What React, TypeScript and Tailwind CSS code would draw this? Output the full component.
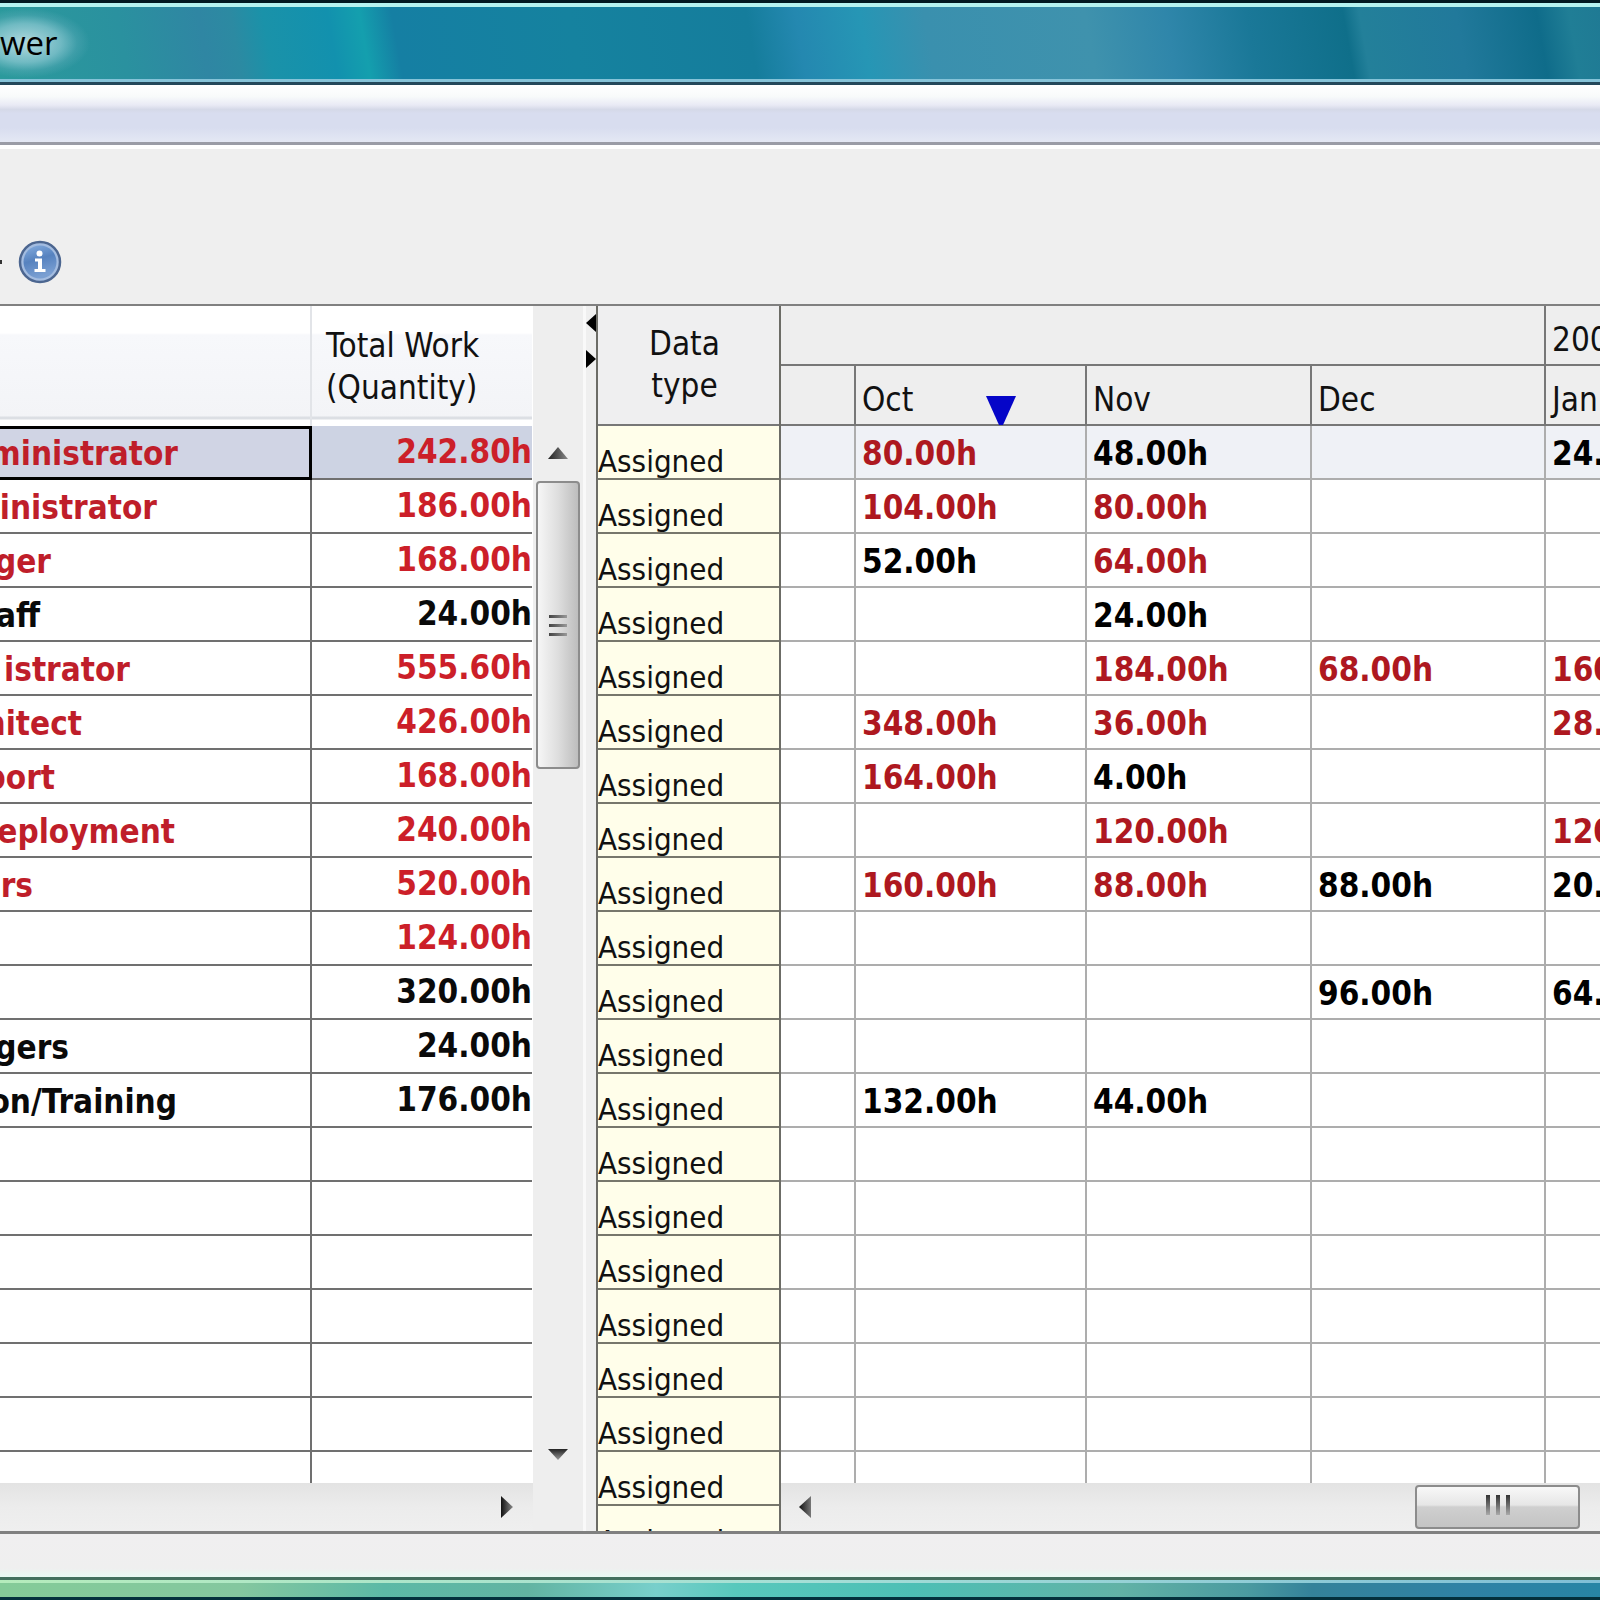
interface Hours {
    value: string;
    over?: boolean;
}

interface ResourceRow {
    name?: string;
    // right edge of the name inside the scrolled column
    nameEnd?: number;
    total?: string;
    over?: boolean;
    oct?: Hours;
    nov?: Hours;
    dec?: Hours;
    jan?: Hours;
}

const resources: ResourceRow[] = [
    { name: 'ministrator', nameEnd: 178, total: '242.80h', over: true, oct: { value: '80.00h', over: true }, nov: { value: '48.00h' }, jan: { value: '24.' } },
    { name: 'inistrator', nameEnd: 157, total: '186.00h', over: true, oct: { value: '104.00h', over: true }, nov: { value: '80.00h', over: true } },
    { name: 'ger', nameEnd: 51, total: '168.00h', over: true, oct: { value: '52.00h' }, nov: { value: '64.00h', over: true } },
    { name: 'aff', nameEnd: 40, total: '24.00h', nov: { value: '24.00h' } },
    { name: 'istrator', nameEnd: 130, total: '555.60h', over: true, nov: { value: '184.00h', over: true }, dec: { value: '68.00h', over: true }, jan: { value: '160', over: true } },
    { name: 'hitect', nameEnd: 82, total: '426.00h', over: true, oct: { value: '348.00h', over: true }, nov: { value: '36.00h', over: true }, jan: { value: '28.', over: true } },
    { name: 'port', nameEnd: 55, total: '168.00h', over: true, oct: { value: '164.00h', over: true }, nov: { value: '4.00h' } },
    { name: 'eployment', nameEnd: 175, total: '240.00h', over: true, nov: { value: '120.00h', over: true }, jan: { value: '120', over: true } },
    { name: 'ers', nameEnd: 33, total: '520.00h', over: true, oct: { value: '160.00h', over: true }, nov: { value: '88.00h', over: true }, dec: { value: '88.00h' }, jan: { value: '20.' } },
    { total: '124.00h', over: true },
    { total: '320.00h', dec: { value: '96.00h' }, jan: { value: '64.' } },
    { name: 'gers', nameEnd: 69, total: '24.00h' },
    { name: 'on/Training', nameEnd: 177, total: '176.00h', oct: { value: '132.00h' }, nov: { value: '44.00h' } },
    {},
    {},
    {},
    {},
    {},
    {},
    {},
];

const months = ['oct', 'nov', 'dec', 'jan'] as const;

function InfoIcon() {
    return (
        <svg viewBox="0 0 44 44" className="w-11 h-11">
            <defs>
                <linearGradient id="info" x1="0" y1="0" x2="0.3" y2="1">
                    <stop offset="0" stopColor="#86aee0" />
                    <stop offset="0.5" stopColor="#5682bf" />
                    <stop offset="1" stopColor="#7a9fd2" />
                </linearGradient>
            </defs>
            <circle cx="22" cy="22" r="20" fill="#a3bce0" stroke="#4c6690" strokeWidth="2.5" />
            <circle cx="22" cy="22" r="16.5" fill="url(#info)" />
            <circle cx="21.5" cy="13.5" r="3" fill="#fff" />
            <path d="M17 18.5h7v10.5h3.5v3h-11v-3H20v-7.5h-3z" fill="#fff" />
        </svg>
    );
}

function TitleBar() {
    return (
        <header>
            <div className="h-[3px] bg-[#021a22]" />
            <div className="h-1 bg-[#b5f3f0]" />
            <div className="h-18 flex items-center overflow-hidden bg-[linear-gradient(80deg,#2b9a9c_0%,#2a919f_8%,#2f86a3_13%,#2c8aa2_15%,#1a92a9_17%,#1291ae_21%,#149fae_23%,#157fa3_25%,#15829f_36%,#157d9c_47%,#2488b0_50%,#2696b5_54%,#3a90ae_58%,#3f92ad_68%,#2f86aa_73%,#1a7898_78%,#0f6f8a_84%,#23809a_85%,#21799b_91%,#0f6c8a_96%,#207e96_98%,#1f7a94_100%)]">
                <div className="-ml-10 pl-10 pr-8 bg-[radial-gradient(closest-side,rgba(185,220,226,0.95),rgba(150,205,215,0.65)_55%,rgba(120,185,200,0.25)_80%,transparent)]">
                    <h1 className="font-['Open_Sans',sans-serif] text-[33px] leading-[70px] text-black">wer</h1>
                </div>
            </div>
            <div className="h-[3px] bg-[#85c3d8]" />
            <div className="h-[3px] bg-[#23485a]" />
        </header>
    );
}

function ResourcePane() {
    return (
        <section className="w-[596px] shrink-0 flex">
            <div className="w-[533px] shrink-0 flex flex-col">
                <div className="h-[1177px] overflow-hidden bg-white">
                    <table className="w-[532px] table-fixed border-separate border-spacing-0">
                        <colgroup>
                            <col className="w-[312px]" />
                            <col />
                        </colgroup>
                        <thead>
                            <tr className="h-30 bg-[linear-gradient(#fff_0,#fff_27px,#f7f8fb_29px,#f3f4f7_110px,#dcdfe4_111px,#dcdfe4_113px,#fff_114px)]">
                                <th className="border-r-2 border-[#e2e4e8]" />
                                <th className="pl-3.5 pt-0.5 text-left font-normal leading-[42px]">
                                    Total Work
                                    <br />
                                    (Quantity)
                                </th>
                            </tr>
                        </thead>
                        <tbody>
                            {resources.map((row, i) => (
                                <tr key={i} className="h-[54px]">
                                    <td className={i === 0
                                        ? 'border-y-3 border-r-3 border-black bg-[#d0d4e4]'
                                        : 'border-b-2 border-r-2 border-[#707070] pt-1'}
                                    >
                                        {row.name && (
                                            <div
                                                className={`flex justify-end whitespace-nowrap font-bold leading-9 ${i === 0 ? 'pt-0.5' : ''} ${row.over ? 'text-[#bf1e2a]' : 'text-[#0a0a0a]'}`}
                                                style={{ width: row.nameEnd }}
                                            >
                                                {row.name}
                                            </div>
                                        )}
                                    </td>
                                    <td className={`border-b-2 border-[#707070] text-right font-bold leading-9 ${i === 0 ? 'bg-[#cdd3e3]' : ''} ${row.over ? 'text-[#cc1f29]' : 'text-[#0a0a0a]'}`}>
                                        {row.total}
                                    </td>
                                </tr>
                            ))}
                        </tbody>
                    </table>
                </div>
                <div className="h-12 flex items-center justify-end pr-5 bg-linear-to-b from-[#e3e3e3] via-[#ececec] to-[#efefef]">
                    <button aria-label="Scroll right">
                        <svg viewBox="0 0 12 22" className="w-3 h-[22px]">
                            <defs>
                                <linearGradient id="right">
                                    <stop offset="0" stopColor="#111" />
                                    <stop offset="1" stopColor="#888" />
                                </linearGradient>
                            </defs>
                            <path d="M0 0L12 11L0 22z" fill="url(#right)" />
                        </svg>
                    </button>
                </div>
            </div>

            {/* vertical scrollbar */}
            <div className="w-[50px] shrink-0 flex flex-col items-center bg-[#eeeeee]">
                <div className="h-[141px]" />
                <button aria-label="Scroll up">
                    <svg viewBox="0 0 20 12" className="w-5 h-3">
                        <defs>
                            <linearGradient id="up" x1="0" y1="0" x2="1" y2="0">
                                <stop offset="0" stopColor="#222" />
                                <stop offset="1" stopColor="#888" />
                            </linearGradient>
                        </defs>
                        <path d="M0 12L10 0L20 12z" fill="url(#up)" />
                    </svg>
                </button>
                <div className="h-[22px]" />
                <button
                    aria-label="Vertical scroll"
                    className="w-11 h-[288px] flex flex-col items-center justify-center gap-1.5 rounded-sm border-2 border-[#8c8c8c] bg-linear-to-r from-[#f6f6f6] via-[#dedede] to-[#bdbdbd]"
                >
                    <span className="w-[18px] h-[3px] bg-linear-to-r from-[#444] to-[#999]" />
                    <span className="w-[18px] h-[3px] bg-linear-to-r from-[#444] to-[#999]" />
                    <span className="w-[18px] h-[3px] bg-linear-to-r from-[#444] to-[#999]" />
                </button>
                <div className="grow" />
                <button aria-label="Scroll down">
                    <svg viewBox="0 0 20 12" className="w-5 h-3">
                        <defs>
                            <linearGradient id="down" x1="0" y1="0" x2="0" y2="1">
                                <stop offset="0" stopColor="#222" />
                                <stop offset="1" stopColor="#999" />
                            </linearGradient>
                        </defs>
                        <path d="M0 0L10 11L20 0z" fill="url(#down)" />
                    </svg>
                </button>
                <div className="h-[70px]" />
            </div>

            {/* splitter */}
            <div className="grow flex flex-col items-end gap-[18px] pt-2 border-l-3 border-[#f9f9f9] bg-[#efefef]">
                <button aria-label="Collapse left">
                    <svg viewBox="0 0 10 18" className="w-2.5 h-[18px]">
                        <path d="M10 0L0 9L10 18z" fill="#000" />
                    </svg>
                </button>
                <button aria-label="Collapse right">
                    <svg viewBox="0 0 10 18" className="w-2.5 h-[18px]">
                        <path d="M0 0L10 9L0 18z" fill="#000" />
                    </svg>
                </button>
            </div>
        </section>
    );
}

function DataTypeColumn() {
    return (
        <div className="w-[185px] shrink-0 h-[1225px] overflow-hidden border-x-2 border-[#6c6c66] bg-[#fffeea]">
            <table className="w-full table-fixed border-separate border-spacing-0">
                <thead>
                    <tr className="h-30 bg-[#efeff0]">
                        <th className="border-b-2 border-[#777] pr-2 font-normal leading-[42px]">
                            Data
                            <br />
                            type
                        </th>
                    </tr>
                </thead>
                <tbody className="text-[31px]">
                    {[...resources, {}].map((_, i) => (
                        <tr key={i} className="h-[54px]">
                            <td className="border-b-2 border-[#77776c] pt-[18px] leading-8">Assigned</td>
                        </tr>
                    ))}
                </tbody>
            </table>
        </div>
    );
}

function Timeline() {
    return (
        <div className="grow min-w-0 flex flex-col">
            <div className="h-[1177px] overflow-hidden bg-white">
                <table className="w-full table-fixed border-separate border-spacing-0">
                    <colgroup>
                        <col className="w-[75px]" />
                        <col className="w-[231px]" />
                        <col className="w-[225px]" />
                        <col className="w-[234px]" />
                        <col />
                    </colgroup>
                    <thead className="bg-[#eeeeee] text-left whitespace-nowrap">
                        <tr className="h-15">
                            <th colSpan={4} className="border-b-2 border-r-2 border-[#777]" />
                            <th className="border-b-2 border-[#777] pl-1.5 pt-2.5 overflow-hidden font-normal leading-9">200</th>
                        </tr>
                        <tr className="h-15">
                            <th className="border-b-2 border-r-2 border-[#777]" />
                            <th className="relative border-b-2 border-r-2 border-[#777] pl-1.5 pt-2.5 font-normal leading-9">
                                Oct
                                {/* current date marker */}
                                <svg viewBox="0 0 30 30" className="absolute left-[130px] top-[30px] w-[30px] h-[30px]">
                                    <path d="M0 0H30L17 29H13z" fill="#0505c8" />
                                </svg>
                            </th>
                            <th className="border-b-2 border-r-2 border-[#777] pl-1.5 pt-2.5 font-normal leading-9">Nov</th>
                            <th className="border-b-2 border-r-2 border-[#777] pl-1.5 pt-2.5 font-normal leading-9">Dec</th>
                            <th className="border-b-2 border-[#777] pl-1.5 pt-2.5 overflow-hidden font-normal leading-9">Jan</th>
                        </tr>
                    </thead>
                    <tbody>
                        {resources.map((row, i) => (
                            <tr key={i} className={`h-[54px] ${i === 0 ? 'bg-[#eff1f6]' : ''}`}>
                                <td className="border-b-2 border-r-2 border-[#adadad]" />
                                {months.map((month) => {
                                    const hours = row[month];
                                    return (
                                        <td
                                            key={month}
                                            className={`border-b-2 border-[#adadad] pl-1.5 pt-1 overflow-hidden whitespace-nowrap font-bold leading-9 ${month === 'jan' ? '' : 'border-r-2'} ${hours?.over ? 'text-[#ae1820]' : 'text-black'}`}
                                        >
                                            {hours?.value}
                                        </td>
                                    );
                                })}
                            </tr>
                        ))}
                    </tbody>
                </table>
            </div>
            <div className="h-12 flex items-center justify-between pl-[18px] pr-5 bg-linear-to-b from-[#e3e3e3] via-[#ececec] to-[#efefef]">
                <button aria-label="Scroll left">
                    <svg viewBox="0 0 12 22" className="w-3 h-[22px]">
                        <defs>
                            <linearGradient id="left">
                                <stop offset="0" stopColor="#111" />
                                <stop offset="1" stopColor="#777" />
                            </linearGradient>
                        </defs>
                        <path d="M12 0L0 11L12 22z" fill="url(#left)" />
                    </svg>
                </button>
                <button
                    aria-label="Horizontal scroll"
                    className="w-[165px] h-11 flex items-center justify-center gap-1.5 pb-1 rounded-sm border-2 border-[#8c8c8c] bg-[linear-gradient(#f8f8f8,#e6e6e6_45%,#cfcfcf_50%,#c4c4c4)]"
                >
                    <span className="w-1 h-5 bg-linear-to-b from-[#333] to-[#aaa]" />
                    <span className="w-1 h-5 bg-linear-to-b from-[#333] to-[#aaa]" />
                    <span className="w-1 h-5 bg-linear-to-b from-[#333] to-[#aaa]" />
                </button>
            </div>
        </div>
    );
}

export default function App() {
    return (
        <div className="w-full overflow-hidden bg-[#efefef] font-['DejaVu_Sans_Condensed','DejaVu_Sans',sans-serif] text-[33px] text-[#111]">
            <TitleBar />

            {/* menu bar */}
            <div className="h-[60px] border-b-3 border-[#9a9ca6] bg-[linear-gradient(#fff_0,#f8fbfb_20%,#e9eaf5_35%,#d5d9e8_43%,#d8ddef_50%,#d8ddef_75%,#e4e8f4_100%)]" />

            {/* toolbar */}
            <div className="h-[159px] flex items-end gap-4 pb-5 border-t-4 border-white">
                <span className="w-0.5 h-1 mb-5 bg-[#333]" />
                <button aria-label="Information">
                    <InfoIcon />
                </button>
            </div>

            <main className="flex border-t-2 border-b-3 border-[#808080]">
                <ResourcePane />
                <DataTypeColumn />
                <Timeline />
            </main>

            {/* status bar and window frame */}
            <footer>
                <div className="h-[43px] bg-[linear-gradient(#f0eff0,#efefef_80%,#e8faf4)]" />
                <div className="h-[3px] bg-[#43705f]" />
                <div className="h-[3px] bg-linear-to-r from-[#b5ecbc] via-[#a5dfd6] to-[#80bfd6]" />
                <div className="h-3.5 bg-[linear-gradient(90deg,#84cb98_0%,#84c79f_15%,#5cb9a6_24%,#62b4a2_33%,#78cfcb_41%,#58c8bc_46%,#4dbfb5_57%,#62b2a6_70%,#4a9aa0_78%,#34829a_82%,#2f82a5_92%,#2785a5_100%)]" />
                <div className="h-[3px] bg-[#03303c]" />
            </footer>
        </div>
    );
}
